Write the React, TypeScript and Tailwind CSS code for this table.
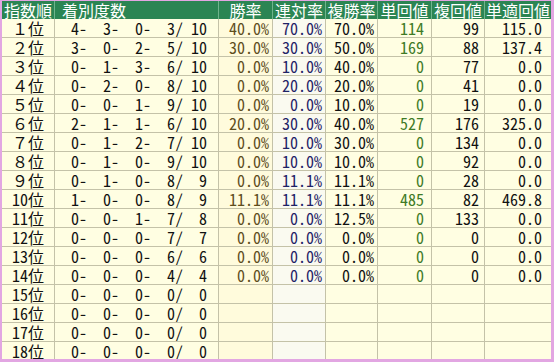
import React from "react";

type Row = {
  label: string;
  a: string; b: string; c: string; d: string; n: string;
  win?: string; ren?: string; fuku?: string;
  tan?: string; fk?: string; tt?: string;
};

const R = (
  label: string, a: string, b: string, c: string, d: string, n: string,
  win?: string, ren?: string, fuku?: string, tan?: string, fk?: string, tt?: string
): Row => ({ label, a, b, c, d, n, win, ren, fuku, tan, fk, tt });

const rows: Row[] = [
  R("１位", "4", "3", "0", "3", "10", "40.0%", "70.0%", "70.0%", "114", "99", "115.0"),
  R("２位", "3", "0", "2", "5", "10", "30.0%", "30.0%", "50.0%", "169", "88", "137.4"),
  R("３位", "0", "1", "3", "6", "10", "0.0%", "10.0%", "40.0%", "0", "77", "0.0"),
  R("４位", "0", "2", "0", "8", "10", "0.0%", "20.0%", "20.0%", "0", "41", "0.0"),
  R("５位", "0", "0", "1", "9", "10", "0.0%", "0.0%", "10.0%", "0", "19", "0.0"),
  R("６位", "2", "1", "1", "6", "10", "20.0%", "30.0%", "40.0%", "527", "176", "325.0"),
  R("７位", "0", "1", "2", "7", "10", "0.0%", "10.0%", "30.0%", "0", "134", "0.0"),
  R("８位", "0", "1", "0", "9", "10", "0.0%", "10.0%", "10.0%", "0", "92", "0.0"),
  R("９位", "0", "1", "0", "8", "9", "0.0%", "11.1%", "11.1%", "0", "28", "0.0"),
  R("10位", "1", "0", "0", "8", "9", "11.1%", "11.1%", "11.1%", "485", "82", "469.8"),
  R("11位", "0", "0", "1", "7", "8", "0.0%", "0.0%", "12.5%", "0", "133", "0.0"),
  R("12位", "0", "0", "0", "7", "7", "0.0%", "0.0%", "0.0%", "0", "0", "0.0"),
  R("13位", "0", "0", "0", "6", "6", "0.0%", "0.0%", "0.0%", "0", "0", "0.0"),
  R("14位", "0", "0", "0", "4", "4", "0.0%", "0.0%", "0.0%", "0", "0", "0.0"),
  R("15位", "0", "0", "0", "0", "0"),
  R("16位", "0", "0", "0", "0", "0"),
  R("17位", "0", "0", "0", "0", "0"),
  R("18位", "0", "0", "0", "0", "0"),
];

const font = "font-['Noto_Sans_Mono_CJK_JP','Noto_Sans_CJK_JP',monospace]";

const H = ({ children, cls = "" }: { children: React.ReactNode; cls?: string }) => (
  <div
    className={`h-[18px] leading-[18px] text-[16px] text-white bg-[#2b8553] border-r border-[#6fb48c] overflow-hidden whitespace-nowrap ${cls}`}
  >
    {children}
  </div>
);

const C = ({ children, cls = "" }: { children?: React.ReactNode; cls?: string }) => (
  <div
    className={`h-[19px] leading-[18px] text-[16px] border-r border-b border-[#c4c2a8] whitespace-pre overflow-hidden ${cls}`}
  >
    {children}
  </div>
);

export default function App() {
  return (
    <div
      className={`w-[554px] h-[362px] overflow-hidden bg-[#fffee2] border-l-2 border-r-[3px] border-t border-b-[3px] border-[#e2a6e2] ${font}`}
    >
      <div className="grid grid-cols-[53px_164px_54px_53px_52px_54px_53px_66px]">
        <H cls="text-center">指数順</H>
        <H cls="pl-[7px]">着別度数</H>
        <H cls="text-center">勝率</H>
        <H cls="text-center">連対率</H>
        <H cls="text-center">複勝率</H>
        <H cls="text-center">単回値</H>
        <H cls="text-center">複回値</H>
        <H cls="text-center border-r-0">単適回値</H>
        {rows.map((r) => (
          <React.Fragment key={r.label}>
            <C cls="text-center text-[#111]">{r.label}</C>
            <C cls="text-[#111]">{`  ${r.a}-  ${r.b}-  ${r.c}-  ${r.d}/ ${r.n.padStart(2, " ")}`}</C>
            <C cls="text-right pr-[3px] text-[#5e4d1c] bg-[#fffbdc]">{r.win}</C>
            <C cls="text-right pr-[3px] text-[#1f2266] bg-[#fafaf0]">{r.ren}</C>
            <C cls="text-right pr-[3px] text-[#111]">{r.fuku}</C>
            <C cls="text-right pr-[7px] text-[#3e7a26]">{r.tan}</C>
            <C cls="text-right pr-[5px] text-[#111]">{r.fk}</C>
            <C cls="text-right pr-[9px] text-[#111] border-r-0">{r.tt}</C>
          </React.Fragment>
        ))}
      </div>
    </div>
  );
}
